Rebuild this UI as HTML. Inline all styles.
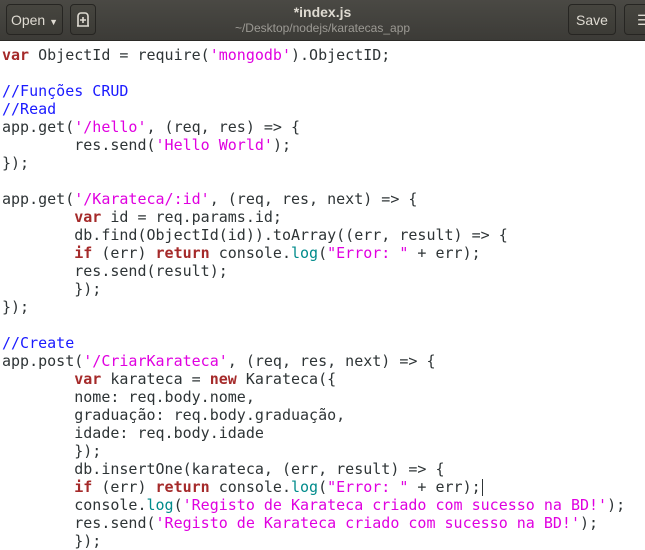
<!DOCTYPE html>
<html><head><meta charset="utf-8"><style>
body{margin:0;width:645px;height:548px;overflow:hidden;background:#fff;font-family:"Liberation Sans",sans-serif}
.hb{position:absolute;left:0;top:0;width:645px;height:40px;background:linear-gradient(#4a4944,#3c3b37);border-bottom:1px solid #2b2a27}
.btn{position:absolute;top:4px;height:31px;border:1px solid #262522;border-radius:4px;background:linear-gradient(#46453f,#3c3b36);color:#dfdbd2;font-size:14px;line-height:31px;box-sizing:border-box;text-align:center}
.t1{position:absolute;left:0;width:645px;text-align:center;top:4px;color:#dfdbd2;font-weight:bold;font-size:14px}
.t2{position:absolute;left:0;width:645px;text-align:center;top:21px;color:#9c9a94;font-size:12px}
pre{position:absolute;left:2px;top:46px;margin:0;font-family:"DejaVu Sans Mono",monospace;font-size:15px;line-height:18px;color:#2e3436;tab-size:8}
.k{color:#a52a2a;font-weight:bold}.s{color:#e000e0}.c{color:#1a1aff}.f{color:#008b8b}
.cur{display:inline-block;width:1px;height:17px;background:#2e3436;vertical-align:-4px;margin-left:1px}
</style></head><body>
<div class="hb">
<div class="btn" style="left:6px;width:57px">Open <span style="font-size:9px">▼</span></div>
<div class="btn" style="left:70px;width:26px"><svg width="16" height="16" viewBox="0 0 16 16" style="margin-top:7px"><path d="M3 14V4a3 3 0 0 1 3-3h4a3 3 0 0 1 3 3v10zM2 14h12" fill="none" stroke="#dfdbd2" stroke-width="1.6"/><path d="M8 5v6M5 8h6" stroke="#dfdbd2" stroke-width="1.6"/></svg></div>
<div class="t1">*index.js</div>
<div class="t2">~/Desktop/nodejs/karatecas_app</div>
<div class="btn" style="left:568px;width:48px">Save</div>
<div class="btn" style="left:624px;width:40px;text-align:left;padding-left:12px">☰</div>
</div>
<pre><span class="k">var</span> ObjectId = require(<span class="s">'mongodb'</span>).ObjectID;

<span class="c">//Funções CRUD</span>
<span class="c">//Read</span>
app.get(<span class="s">'/hello'</span>, (req, res) =&gt; {
	res.send(<span class="s">'Hello World'</span>);
});

app.get(<span class="s">'/Karateca/:id'</span>, (req, res, next) =&gt; {
	<span class="k">var</span> id = req.params.id;
	db.find(ObjectId(id)).toArray((err, result) =&gt; {
	<span class="k">if</span> (err) <span class="k">return</span> console.<span class="f">log</span>(<span class="s">"Error: "</span> + err);
	res.send(result);
	});
});

<span class="c">//Create</span>
app.post(<span class="s">'/CriarKarateca'</span>, (req, res, next) =&gt; {
	<span class="k">var</span> karateca = <span class="k">new</span> Karateca({
	nome: req.body.nome,
	graduação: req.body.graduação,
	idade: req.body.idade
	});
	db.insertOne(karateca, (err, result) =&gt; {
	<span class="k">if</span> (err) <span class="k">return</span> console.<span class="f">log</span>(<span class="s">"Error: "</span> + err);<span class="cur"></span>
	console.<span class="f">log</span>(<span class="s">'Registo de Karateca criado com sucesso na BD!'</span>);
	res.send(<span class="s">'Registo de Karateca criado com sucesso na BD!'</span>);
	});</pre>
</body></html>
